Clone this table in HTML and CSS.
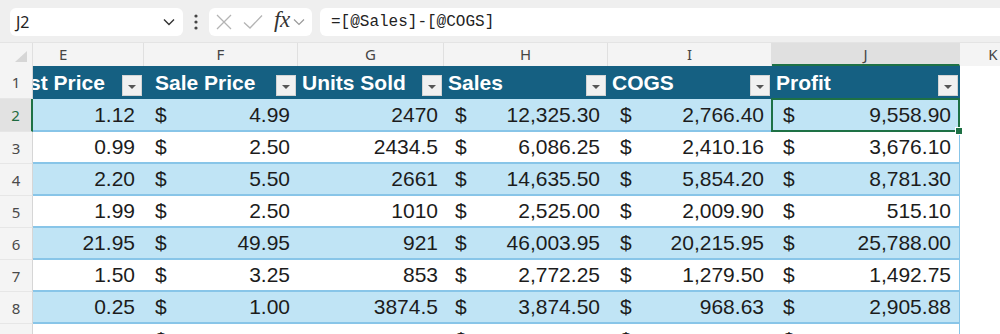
FILE: index.html
```html
<!DOCTYPE html>
<html>
<head>
<meta charset="utf-8">
<link rel="stylesheet" href="styles.css">
</head>
<body>
<div class="toolbar">
  <div class="namebox">
    <span>J2</span>
    <svg class="chev" width="12" height="8" viewBox="0 0 12 8"><path d="M1 1.5 L6 6.5 L11 1.5" fill="none" stroke="#333" stroke-width="1.4"/></svg>
  </div>
  <div class="dots">
    <svg width="4" height="16" viewBox="0 0 4 16"><circle cx="2" cy="2" r="1.6" fill="#444"/><circle cx="2" cy="8" r="1.6" fill="#444"/><circle cx="2" cy="14" r="1.6" fill="#444"/></svg>
  </div>
  <div class="fnbtns">
    <svg class="ic-x" width="16" height="16" viewBox="0 0 16 16"><path d="M1 1 L15 15 M15 1 L1 15" stroke="#b4b4b4" stroke-width="1.3" fill="none"/></svg>
    <svg class="ic-ok" width="20" height="16" viewBox="0 0 20 16"><path d="M1 8.5 L7 14 L19 1.5" stroke="#b4b4b4" stroke-width="1.3" fill="none"/></svg>
    <span class="fx">fx</span>
    <svg class="ic-chev" width="12" height="8" viewBox="0 0 12 8"><path d="M1 1.5 L6 6.5 L11 1.5" fill="none" stroke="#9a9a9a" stroke-width="1.2"/></svg>
  </div>
  <div class="formula">=[@Sales]-[@COGS]</div>
</div>

<div class="colheads">
  <div class="corner"><svg width="12" height="11" viewBox="0 0 12 11"><path d="M12 0 L12 11 L0 11 Z" fill="#d6d6d6"/></svg></div>
  <div class="ch c-e left">E</div>
  <div class="ch c-f">F</div>
  <div class="ch c-g">G</div>
  <div class="ch c-h">H</div>
  <div class="ch c-i">I</div>
  <div class="ch c-j sel">J</div>
  <div class="ch c-k">K</div>
</div>

<div class="sheet">
  <div class="row thead">
    <div class="rh">1</div>
    <div class="hc c-e clip"><span class="cut">Cost Price</span><i class="fb"></i></div>
    <div class="hc c-f"><span class="pad">Sale Price</span><i class="fb"></i></div>
    <div class="hc c-g"><span>Units Sold</span><i class="fb"></i></div>
    <div class="hc c-h"><span>Sales</span><i class="fb"></i></div>
    <div class="hc c-i"><span>COGS</span><i class="fb"></i></div>
    <div class="hc c-j"><span>Profit</span><i class="fb"></i></div>
    <div class="rest"></div>
  </div>

  <div class="row band first">
    <div class="rh rsel">2</div>
    <div class="dc c-e num">1.12</div>
    <div class="dc c-f cur"><span>$</span><span>4.99</span></div>
    <div class="dc c-g num">2470</div>
    <div class="dc c-h cur"><span>$</span><span>12,325.30</span></div>
    <div class="dc c-i cur"><span>$</span><span>2,766.40</span></div>
    <div class="dc c-j cur active"><span>$</span><span>9,558.90</span></div>
    <div class="rest"></div>
  </div>

  <div class="row">
    <div class="rh">3</div>
    <div class="dc c-e num">0.99</div>
    <div class="dc c-f cur"><span>$</span><span>2.50</span></div>
    <div class="dc c-g num">2434.5</div>
    <div class="dc c-h cur"><span>$</span><span>6,086.25</span></div>
    <div class="dc c-i cur"><span>$</span><span>2,410.16</span></div>
    <div class="dc c-j cur"><span>$</span><span>3,676.10</span></div>
    <div class="rest"></div>
  </div>

  <div class="row band">
    <div class="rh">4</div>
    <div class="dc c-e num">2.20</div>
    <div class="dc c-f cur"><span>$</span><span>5.50</span></div>
    <div class="dc c-g num">2661</div>
    <div class="dc c-h cur"><span>$</span><span>14,635.50</span></div>
    <div class="dc c-i cur"><span>$</span><span>5,854.20</span></div>
    <div class="dc c-j cur"><span>$</span><span>8,781.30</span></div>
    <div class="rest"></div>
  </div>

  <div class="row">
    <div class="rh">5</div>
    <div class="dc c-e num">1.99</div>
    <div class="dc c-f cur"><span>$</span><span>2.50</span></div>
    <div class="dc c-g num">1010</div>
    <div class="dc c-h cur"><span>$</span><span>2,525.00</span></div>
    <div class="dc c-i cur"><span>$</span><span>2,009.90</span></div>
    <div class="dc c-j cur"><span>$</span><span>515.10</span></div>
    <div class="rest"></div>
  </div>

  <div class="row band">
    <div class="rh">6</div>
    <div class="dc c-e num">21.95</div>
    <div class="dc c-f cur"><span>$</span><span>49.95</span></div>
    <div class="dc c-g num">921</div>
    <div class="dc c-h cur"><span>$</span><span>46,003.95</span></div>
    <div class="dc c-i cur"><span>$</span><span>20,215.95</span></div>
    <div class="dc c-j cur"><span>$</span><span>25,788.00</span></div>
    <div class="rest"></div>
  </div>

  <div class="row">
    <div class="rh">7</div>
    <div class="dc c-e num">1.50</div>
    <div class="dc c-f cur"><span>$</span><span>3.25</span></div>
    <div class="dc c-g num">853</div>
    <div class="dc c-h cur"><span>$</span><span>2,772.25</span></div>
    <div class="dc c-i cur"><span>$</span><span>1,279.50</span></div>
    <div class="dc c-j cur"><span>$</span><span>1,492.75</span></div>
    <div class="rest"></div>
  </div>

  <div class="row band">
    <div class="rh">8</div>
    <div class="dc c-e num">0.25</div>
    <div class="dc c-f cur"><span>$</span><span>1.00</span></div>
    <div class="dc c-g num">3874.5</div>
    <div class="dc c-h cur"><span>$</span><span>3,874.50</span></div>
    <div class="dc c-i cur"><span>$</span><span>968.63</span></div>
    <div class="dc c-j cur"><span>$</span><span>2,905.88</span></div>
    <div class="rest"></div>
  </div>

  <div class="row last">
    <div class="rh"></div>
    <div class="dc c-e num"></div>
    <div class="dc c-f cur"><span>$</span></div>
    <div class="dc c-g num"></div>
    <div class="dc c-h cur"><span>$</span></div>
    <div class="dc c-i cur"><span>$</span></div>
    <div class="dc c-j cur"><span>$</span></div>
    <div class="rest"></div>
  </div>
</div>
</body>
</html>
```

FILE: styles.css
```css
* { box-sizing: border-box; margin: 0; padding: 0; }

body {
  width: 1000px;
  height: 334px;
  overflow: hidden;
  background: #ffffff;
  font-family: "Liberation Sans", Arial, sans-serif;
}

/* ---------- formula bar ---------- */
.toolbar {
  height: 42px;
  background: #efefef;
  display: flex;
  align-items: flex-start;
  padding: 8px 0 0 10px;
}

.namebox {
  width: 173px;
  height: 28px;
  background: #fff;
  border-radius: 6px;
  display: flex;
  align-items: center;
  justify-content: space-between;
  padding: 0 8px 0 6px;
  font-family: "Noto Sans", sans-serif;
  font-size: 16px;
  color: #222;
}

.dots {
  width: 26px;
  height: 28px;
  display: flex;
  align-items: center;
  justify-content: center;
}

.fnbtns {
  width: 103px;
  height: 28px;
  background: #fff;
  border-radius: 6px;
  display: flex;
  align-items: center;
  padding-left: 7px;
}

.ic-x { margin-right: 11px; }
.ic-ok { margin-right: 11px; }

.fx {
  font-family: "Liberation Serif", serif;
  font-style: italic;
  font-size: 23px;
  color: #333;
  margin-right: 3px;
  margin-top: -4px;
  letter-spacing: -0.5px;
}

.formula {
  flex: 1;
  height: 28px;
  margin-left: 8px;
  background: #fff;
  border-radius: 6px 0 0 6px;
  padding-left: 11px;
  font-family: "Liberation Mono", monospace;
  font-size: 16px;
  line-height: 28px;
  color: #222;
}

/* ---------- column headers ---------- */
.colheads {
  height: 24px;
  display: flex;
  background: #f4f4f4;
  border-top: 1px solid #e4e4e4;
  font-family: "Noto Sans", sans-serif;
  font-size: 15px;
  color: #454545;
}

.corner {
  width: 33px;
  flex: none;
  display: flex;
  align-items: flex-end;
  justify-content: flex-end;
  padding: 0 5px 4px 0;
  border-right: 1px solid #e0e0e0;
}

.ch {
  flex: none;
  text-align: center;
  line-height: 23px;
  border-right: 1px solid #e0e0e0;
}

.ch.left { text-align: left; padding-left: 26px; }

.ch.sel {
  background: #e0e0e0;
  border-bottom: 2px solid #1e7145;
  color: #454545;
}

.ch.c-k { border-right: none; width: 66px; }

/* column widths */
.c-e { width: 111px; flex: none; }
.c-f { width: 154px; flex: none; }
.c-g { width: 146px; flex: none; }
.c-h { width: 164px; flex: none; }
.c-i { width: 164px; flex: none; }
.c-j { width: 188px; flex: none; }

/* ---------- sheet ---------- */
.row {
  display: flex;
  height: 32px;
}

.row.thead { height: 33px; }
.row.first { height: 33px; }

.rh {
  width: 33px;
  flex: none;
  background: #f4f4f4;
  border-right: 1px solid #d6d6d6;
  border-bottom: 1px solid #e6e6e6;
  font-family: "Noto Sans", sans-serif;
  font-size: 15px;
  color: #4a4a4a;
  display: flex;
  align-items: center;
  justify-content: center;
}

.rh.rsel {
  background: #e2e2e2;
  color: #1e6b40;
  border-right: 2px solid #1e7145;
}

.rest { flex: 1; background: #fff; }

/* header row */
.hc {
  background: #156082;
  color: #fff;
  font-weight: bold;
  font-size: 21px;
  display: flex;
  align-items: center;
  justify-content: space-between;
  padding: 0 2px 0 4px;
  white-space: nowrap;
  overflow: hidden;
}

.hc.clip { padding-left: 0; }
.hc .cut { margin-left: -32px; }
.hc .pad { padding-left: 7px; }

.fb {
  width: 20px;
  height: 21px;
  flex: none;
  margin-top: 6px;
  background: #f1f1f1;
  border: 1px solid #d4d4d4;
  display: flex;
  align-items: center;
  justify-content: center;
}

.fb::after {
  content: "";
  width: 0;
  height: 0;
  margin-top: 3px;
  border-left: 4px solid transparent;
  border-right: 4px solid transparent;
  border-top: 4px solid #555;
}

/* data cells */
.dc {
  font-size: 21px;
  color: #1c1c1c;
  display: flex;
  align-items: center;
  padding: 0 8px 0 11px;
  border-bottom: 2px solid #88c5e8;
  background: #fff;
  white-space: nowrap;
}

.row.band .dc { background: #c0e4f5; }

.row.last .dc { align-items: flex-start; padding-top: 4px; }

.dc.num { justify-content: flex-end; padding-right: 9px; }
.dc.c-g.num { padding-right: 6px; }
.dc.cur { justify-content: space-between; }
.dc.c-i.cur { padding-left: 12px; }
.dc.c-j { border-right: 1px solid #88c5e8; }

/* active cell J2 */
.dc.active { position: relative; }
.dc.active::after {
  content: "";
  position: absolute;
  left: -1px;
  top: -1px;
  right: -1px;
  bottom: -2px;
  border: 2px solid #1e7145;
}
.dc.active::before {
  content: "";
  position: absolute;
  right: -4px;
  bottom: -5px;
  width: 6px;
  height: 6px;
  background: #1e7145;
  border: 1px solid #fff;
  z-index: 2;
}
```
